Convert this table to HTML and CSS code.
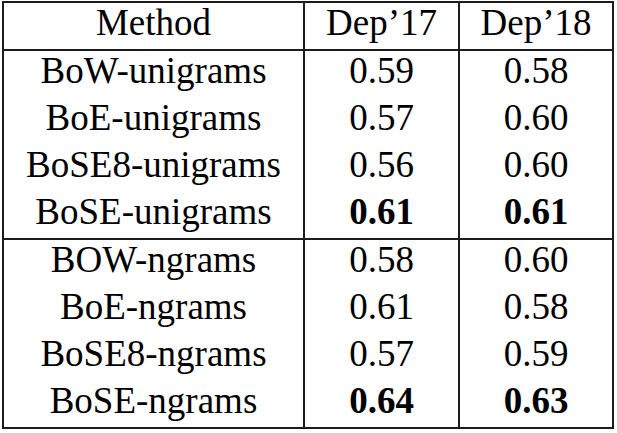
FILE: index.html
```html
<!DOCTYPE html>
<html>
<head>
<meta charset="utf-8">
<link rel="stylesheet" href="styles.css">
</head>
<body>
<table class="results">
  <thead>
    <tr class="head"><th class="c1">Method</th><th class="c2">Dep’17</th><th class="c3">Dep’18</th></tr>
  </thead>
  <tbody>
    <tr class="r"><td>BoW-unigrams</td><td>0.59</td><td>0.58</td></tr>
    <tr class="r"><td>BoE-unigrams</td><td>0.57</td><td>0.60</td></tr>
    <tr class="r"><td>BoSE8-unigrams</td><td>0.56</td><td>0.60</td></tr>
    <tr class="r last"><td>BoSE-unigrams</td><td class="b">0.61</td><td class="b">0.61</td></tr>
  </tbody>
  <tbody>
    <tr class="r"><td>BOW-ngrams</td><td>0.58</td><td>0.60</td></tr>
    <tr class="r"><td>BoE-ngrams</td><td>0.61</td><td>0.58</td></tr>
    <tr class="r"><td>BoSE8-ngrams</td><td>0.57</td><td>0.59</td></tr>
    <tr class="r last"><td>BoSE-ngrams</td><td class="b">0.64</td><td class="b">0.63</td></tr>
  </tbody>
</table>
</body>
</html>
```
FILE: styles.css
```css
html, body {
  margin: 0;
  padding: 0;
  background: #fff;
}
body {
  padding: 1px 0 0 2px;
}
.results {
  border-collapse: separate;
  border-spacing: 0;
  border-left: 2px solid #1c1c1c;
  border-top: 2px solid #1c1c1c;
  font-family: "Liberation Serif", "Times New Roman", serif;
  font-size: 37px;
  color: #000;
}
.results th,
.results td {
  padding: 0;
  text-align: center;
  vertical-align: top;
  line-height: 40px;
  font-weight: normal;
  border-right: 2px solid #1c1c1c;
  box-sizing: content-box;
}
.results th.c1 { width: 299px; }
.results th.c2 { width: 153px; }
.results th.c3 { width: 152px; }
.results .head th {
  height: 46px;
  border-bottom: 2px solid #1c1c1c;
}
.results .r td {
  height: 47px;
}
.results .r.last td {
  height: 46px;
  border-bottom: 2px solid #1c1c1c;
}
.results td.b {
  font-weight: bold;
}
```
